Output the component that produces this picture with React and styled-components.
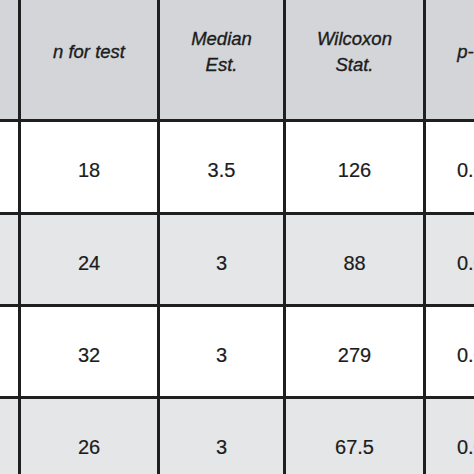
import styled, { createGlobalStyle } from "styled-components";

const GlobalStyle = createGlobalStyle`
  html, body {
    margin: 0;
    padding: 0;
    overflow: hidden;
    background: #ffffff;
  }
`;

const Table = styled.div`
  display: grid;
  grid-template-columns: 18px 136px 123px 137px 123px;
  grid-template-rows: 119px 90px 89px 89px 90px;
  gap: 3px;
  background: #1f1f1f;
  width: max-content;
  font-family: "Liberation Sans", Arial, sans-serif;
  color: #1c1c1c;
`;

const HeadCell = styled.div`
  background: #d3d5d8;
  display: flex;
  align-items: center;
  justify-content: center;
  text-align: center;
  padding-bottom: 15px;
  box-sizing: border-box;
  font-size: 18.5px;
  font-style: italic;
  line-height: 26px;
  white-space: nowrap;
  -webkit-text-stroke: 0.35px #1c1c1c;
`;

const Cell = styled.div`
  background: ${(p) => (p.$shaded ? "#e5e6e8" : "#ffffff")};
  display: flex;
  align-items: center;
  justify-content: center;
  padding-top: 7px;
  box-sizing: border-box;
  font-size: 20px;
  white-space: nowrap;
  -webkit-text-stroke: 0.2px #1c1c1c;
`;

const headers = ["", "n for test", "Median\nEst.", "Wilcoxon\nStat.", "p-value"];

const rows = [
  ["", "18", "3.5", "126", "0.0001"],
  ["", "24", "3", "88", "0.0002"],
  ["", "32", "3", "279", "0.0001"],
  ["", "26", "3", "67.5", "0.0005"],
];

const App = () => {
  return (
    <>
      <GlobalStyle />
      <Table>
        {headers.map((h, i) => (
          <HeadCell key={"h" + i}>
            <span>
              {h.split("\n").map((line, j) => (
                <div key={j}>{line}</div>
              ))}
            </span>
          </HeadCell>
        ))}
        {rows.map((row, r) =>
          row.map((val, c) => (
            <Cell key={r + "-" + c} $shaded={r % 2 === 1}>
              {val}
            </Cell>
          ))
        )}
      </Table>
    </>
  );
};

export default App;
